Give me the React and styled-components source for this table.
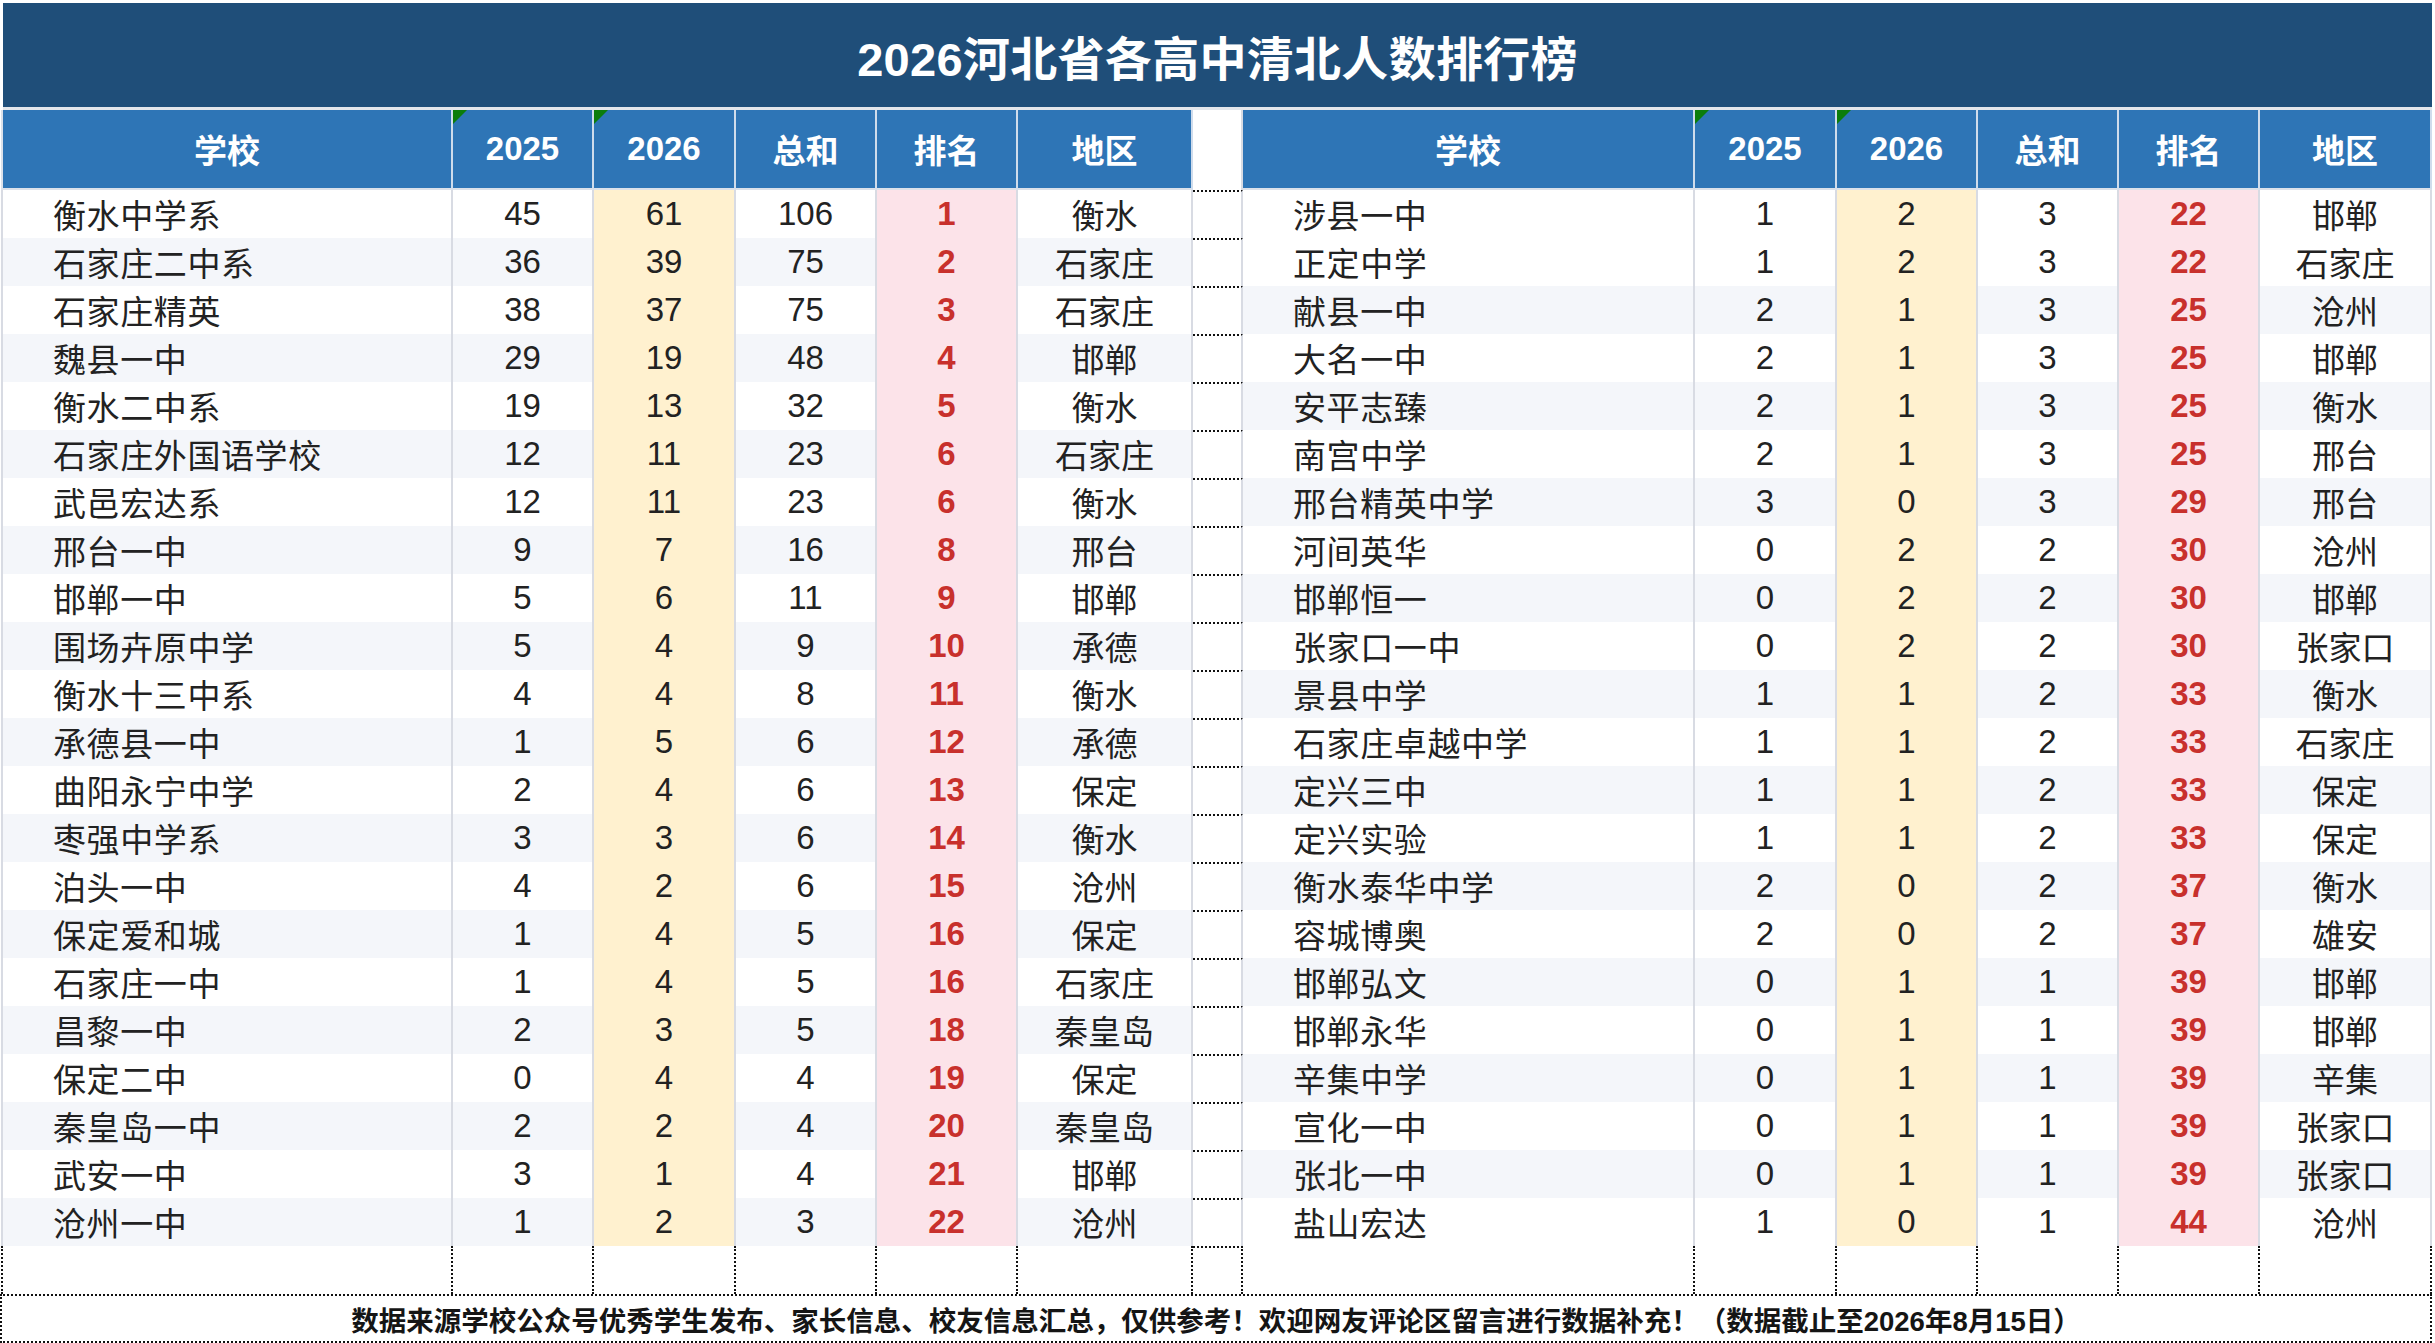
import React from 'react';
import styled, { createGlobalStyle, css } from 'styled-components';

// column widths measured from the sheet: 6 left columns, a spacer, 6 right columns
const COLUMNS = '452px 141px 142px 141px 141px 175px 50px 452px 142px 141px 141px 141px 172px';

const LINE = '#d8dbe3';
const DOTS = '2px dotted #111';

const GlobalStyle = createGlobalStyle`
  html, body {
    margin: 0;
    padding: 0;
    background: #ffffff;
  }
  body {
    font-family: "Liberation Sans", "Noto Sans CJK SC", sans-serif;
    color: #222222;
  }
`;

const Sheet = styled.div`
  width: 2435px;
  padding: 3px 3px 0 1px;
  box-sizing: border-box;
`;

const TitleBar = styled.div`
  margin-left: 2px;
  height: 104px;
  background: #1f4e79;
  border-bottom: 3px solid #e3e6eb;
  display: flex;
  align-items: center;
  justify-content: center;
  color: #ffffff;
  font-size: 47px;
  font-weight: 700;
  letter-spacing: 0.3px;
`;

const Row = styled.div`
  display: grid;
  grid-template-columns: ${COLUMNS};
  height: ${props => props.$height}px;
`;

const HeadCell = styled.div`
  position: relative;
  box-sizing: border-box;
  background: #2e75b6;
  color: #ffffff;
  font-size: 33px;
  font-weight: 700;
  display: flex;
  align-items: center;
  justify-content: center;
  border-right: 2px solid #cfdcec;
  border-bottom: 2px solid #dbe1ea;
  ${props => props.$first && css`border-left: 2px solid #dbe1ea;`}

  ${props => props.$flag && css`
    &::before {
      content: '';
      position: absolute;
      top: 0;
      left: 0;
      width: 0;
      height: 0;
      border-top: 14px solid #0b7d0b;
      border-right: 14px solid transparent;
    }
  `}
`;

const GapHead = styled.div`
  box-sizing: border-box;
  background: #ffffff;
  border-right: 2px solid ${LINE};
`;

const toneColor = (tone, alt) => {
  if (tone === 'year') return '#fff1cf';
  if (tone === 'rank') return '#fce3e9';
  return alt ? '#f4f6fa' : '#ffffff';
};

const Cell = styled.div`
  box-sizing: border-box;
  background: ${props => toneColor(props.$tone, props.$alt)};
  border-right: 2px solid ${LINE};
  border-bottom: 2px solid ${LINE};
  ${props => props.$first && css`border-left: 2px solid ${LINE};`}
  display: flex;
  align-items: center;
  justify-content: ${props => (props.$left ? 'flex-start' : 'center')};
  padding-left: ${props => (props.$left ? '50px' : '0')};
  font-size: 33px;
  letter-spacing: ${props => (props.$left ? '0.6px' : '0')};
  color: ${props => (props.$tone === 'rank' ? '#c8302c' : '#222222')};
  font-weight: ${props => (props.$tone === 'rank' ? 700 : 400)};
  white-space: nowrap;
`;

const GapCell = styled.div`
  box-sizing: border-box;
  background: #ffffff;
  border-top: ${DOTS};
  border-right: 2px solid ${LINE};
`;

const BlankCell = styled.div`
  box-sizing: border-box;
  background: #ffffff;
  border-right: ${DOTS};
  ${props => props.$first && css`border-left: ${DOTS};`}
  ${props => props.$gap && css`border-top: ${DOTS};`}
`;

const Footer = styled.div`
  box-sizing: border-box;
  height: 49px;
  width: 2432px;
  margin-left: -1px;
  border: ${DOTS};
  display: flex;
  align-items: center;
  justify-content: center;
  font-size: 27.5px;
  font-weight: 700;
  color: #151515;
`;

const HEADERS = ['学校', '2025', '2026', '总和', '排名', '地区'];

const LEFT = [
  ['衡水中学系', 45, 61, 106, 1, '衡水'],
  ['石家庄二中系', 36, 39, 75, 2, '石家庄'],
  ['石家庄精英', 38, 37, 75, 3, '石家庄'],
  ['魏县一中', 29, 19, 48, 4, '邯郸'],
  ['衡水二中系', 19, 13, 32, 5, '衡水'],
  ['石家庄外国语学校', 12, 11, 23, 6, '石家庄'],
  ['武邑宏达系', 12, 11, 23, 6, '衡水'],
  ['邢台一中', 9, 7, 16, 8, '邢台'],
  ['邯郸一中', 5, 6, 11, 9, '邯郸'],
  ['围场卉原中学', 5, 4, 9, 10, '承德'],
  ['衡水十三中系', 4, 4, 8, 11, '衡水'],
  ['承德县一中', 1, 5, 6, 12, '承德'],
  ['曲阳永宁中学', 2, 4, 6, 13, '保定'],
  ['枣强中学系', 3, 3, 6, 14, '衡水'],
  ['泊头一中', 4, 2, 6, 15, '沧州'],
  ['保定爱和城', 1, 4, 5, 16, '保定'],
  ['石家庄一中', 1, 4, 5, 16, '石家庄'],
  ['昌黎一中', 2, 3, 5, 18, '秦皇岛'],
  ['保定二中', 0, 4, 4, 19, '保定'],
  ['秦皇岛一中', 2, 2, 4, 20, '秦皇岛'],
  ['武安一中', 3, 1, 4, 21, '邯郸'],
  ['沧州一中', 1, 2, 3, 22, '沧州'],
];

const RIGHT = [
  ['涉县一中', 1, 2, 3, 22, '邯郸'],
  ['正定中学', 1, 2, 3, 22, '石家庄'],
  ['献县一中', 2, 1, 3, 25, '沧州'],
  ['大名一中', 2, 1, 3, 25, '邯郸'],
  ['安平志臻', 2, 1, 3, 25, '衡水'],
  ['南宫中学', 2, 1, 3, 25, '邢台'],
  ['邢台精英中学', 3, 0, 3, 29, '邢台'],
  ['河间英华', 0, 2, 2, 30, '沧州'],
  ['邯郸恒一', 0, 2, 2, 30, '邯郸'],
  ['张家口一中', 0, 2, 2, 30, '张家口'],
  ['景县中学', 1, 1, 2, 33, '衡水'],
  ['石家庄卓越中学', 1, 1, 2, 33, '石家庄'],
  ['定兴三中', 1, 1, 2, 33, '保定'],
  ['定兴实验', 1, 1, 2, 33, '保定'],
  ['衡水泰华中学', 2, 0, 2, 37, '衡水'],
  ['容城博奥', 2, 0, 2, 37, '雄安'],
  ['邯郸弘文', 0, 1, 1, 39, '邯郸'],
  ['邯郸永华', 0, 1, 1, 39, '邯郸'],
  ['辛集中学', 0, 1, 1, 39, '辛集'],
  ['宣化一中', 0, 1, 1, 39, '张家口'],
  ['张北一中', 0, 1, 1, 39, '张家口'],
  ['盐山宏达', 1, 0, 1, 44, '沧州'],
];

const TONES = ['plain', 'plain', 'year', 'plain', 'rank', 'plain'];

const HalfCells = ({ row, alt, first }) =>
  row.map((value, i) => (
    <Cell
      key={i}
      $tone={TONES[i]}
      $alt={alt}
      $left={i === 0}
      $first={first && i === 0}
    >
      {value}
    </Cell>
  ));

const HeadCells = ({ first }) =>
  HEADERS.map((label, i) => (
    <HeadCell key={label} $first={first && i === 0} $flag={i === 1 || i === 2}>
      {label}
    </HeadCell>
  ));

export default function App() {
  return (
    <>
      <GlobalStyle />
      <Sheet>
        <TitleBar>2026河北省各高中清北人数排行榜</TitleBar>

        <Row $height={80}>
          <HeadCells first />
          <GapHead />
          <HeadCells />
        </Row>

        {LEFT.map((left, idx) => (
          <Row key={left[0]} $height={48}>
            <HalfCells row={left} alt={idx % 2 === 1} first />
            <GapCell />
            <HalfCells row={RIGHT[idx]} alt={idx > 0 && idx % 2 === 0} />
          </Row>
        ))}

        <Row $height={48}>
          {Array.from({ length: 13 }, (_, i) => (
            <BlankCell key={i} $first={i === 0} $gap={i === 6} />
          ))}
        </Row>

        <Footer>
          数据来源学校公众号优秀学生发布、家长信息、校友信息汇总，仅供参考！欢迎网友评论区留言进行数据补充！（数据截止至2026年8月15日）
        </Footer>
      </Sheet>
    </>
  );
}
